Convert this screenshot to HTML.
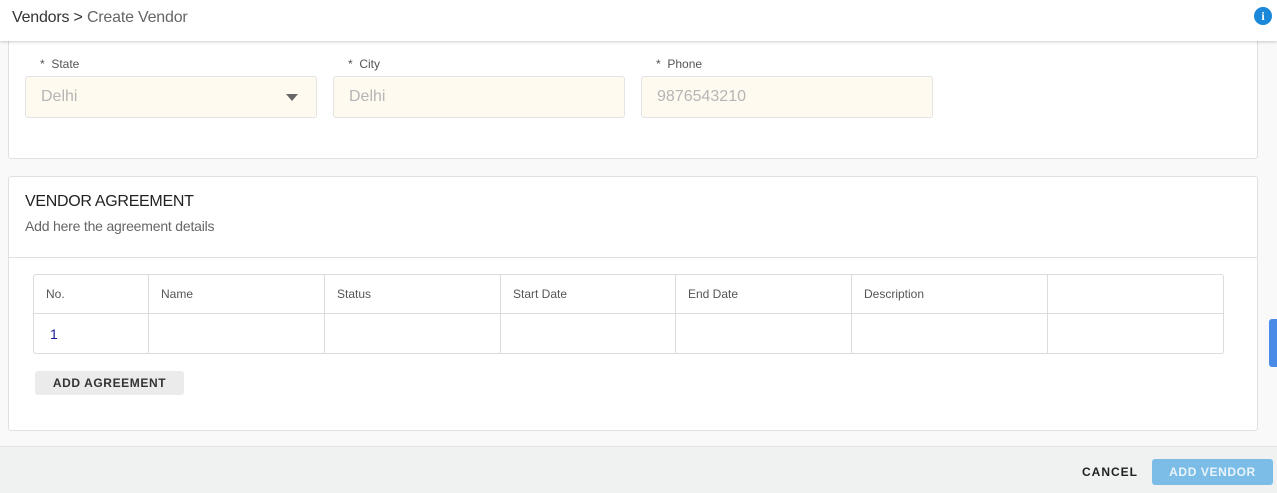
<!DOCTYPE html>
<html><head><style>
*{box-sizing:border-box;margin:0;padding:0}
body{width:1277px;height:493px;overflow:hidden;background:#f9f9f9;font-family:"Liberation Sans",sans-serif;position:relative}
.hdr{position:absolute;left:0;top:0;width:1277px;height:41px;background:#fff;box-shadow:0 1px 3px rgba(0,0,0,.2);z-index:2}
.hdr .t{position:absolute;left:12px;top:9px;font-size:16px;color:#333;letter-spacing:-.2px}
.hdr .t span{color:#666}
.info{position:absolute;left:1254px;top:7px;width:18px;height:18px;border-radius:50%;background:#1a87d8;color:#fff;font:bold 12px "Liberation Serif",serif;text-align:center;line-height:18px}
.card{position:absolute;left:8px;width:1250px;background:#fff;border:1px solid #e0e0e0;border-radius:3px}
.lbl{position:absolute;font-size:12px;color:#555}
.inp{position:absolute;height:42px;width:292px;background:#fffaf0;border:1px solid #e3e3e3;border-radius:3px;font-size:16px;color:#b5b5b5;padding:11px 15px}
.tri{position:absolute;right:18px;top:17px;border-left:6px solid transparent;border-right:6px solid transparent;border-top:7px solid #666}
table{position:absolute;left:24px;top:97px;width:1191px;border-collapse:separate;border-spacing:0;border:1px solid #dcdcdc;border-radius:3px}
td{height:39px;border-right:1px solid #dcdcdc;font-size:12px;color:#555;padding-left:12px}
tr:first-child td{border-bottom:1px solid #dcdcdc}
td:last-child{border-right:none}
.btn{position:absolute;left:26px;top:194px;width:149px;height:24px;background:#ebebeb;border-radius:3px;font-size:12px;font-weight:bold;color:#333;letter-spacing:.6px;text-align:center;line-height:24px}
.foot{position:absolute;left:0;top:446px;width:1277px;height:47px;background:#f0f1f1;border-top:1px solid #e2e2e2}
</style></head><body>
<div class="hdr"><div class="t">Vendors &gt; <span>Create Vendor</span></div><div class="info">i</div></div>
<div class="card" style="top:30px;height:129px">
<div class="lbl" style="left:31px;top:26px">*&nbsp; State</div>
<div class="lbl" style="left:339px;top:26px">*&nbsp; City</div>
<div class="lbl" style="left:647px;top:26px">*&nbsp; Phone</div>
<div class="inp" style="left:16px;top:45px">Delhi<div class="tri"></div></div>
<div class="inp" style="left:324px;top:45px">Delhi</div>
<div class="inp" style="left:632px;top:45px">9876543210</div>
</div>
<div class="card" style="top:176px;height:255px">
<div style="position:absolute;left:16px;top:16px;font-size:16px;color:#222;letter-spacing:-.3px">VENDOR AGREEMENT</div>
<div style="position:absolute;left:16px;top:41px;font-size:14px;color:#666;letter-spacing:-.2px">Add here the agreement details</div>
<div style="position:absolute;left:0;top:80px;width:100%;border-top:1px solid #e0e0e0"></div>
<table><tr><td style="width:115px">No.</td><td style="width:176px">Name</td><td style="width:176px">Status</td><td style="width:175px">Start Date</td><td style="width:176px">End Date</td><td style="width:196px">Description</td><td></td></tr>
<tr><td style="color:#1a1a9a;font-size:14px;padding-left:16px">1</td><td></td><td></td><td></td><td></td><td></td><td></td></tr></table>
<div class="btn">ADD AGREEMENT</div>
</div>
<div style="position:absolute;left:1269px;top:319px;width:8px;height:48px;background:#4a8be8;border-radius:3px 0 0 3px"></div>
<div class="foot">
<div style="position:absolute;left:1082px;top:18px;font-size:12px;font-weight:bold;letter-spacing:1px;color:#222">CANCEL</div>
<div style="position:absolute;left:1152px;top:12px;width:121px;height:26px;background:#7bbde6;border-radius:3px;color:#e9f4fb;font-size:12px;font-weight:bold;letter-spacing:.6px;text-align:center;line-height:26px">ADD VENDOR</div>
</div>
</body></html>
